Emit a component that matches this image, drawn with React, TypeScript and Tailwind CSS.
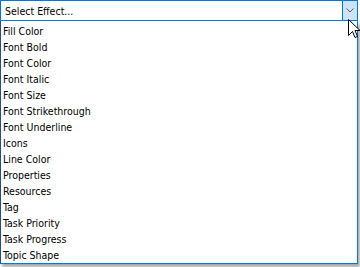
import React from "react";

const effects = [
  "Fill Color",
  "Font Bold",
  "Font Color",
  "Font Italic",
  "Font Size",
  "Font Strikethrough",
  "Font Underline",
  "Icons",
  "Line Color",
  "Properties",
  "Resources",
  "Tag",
  "Task Priority",
  "Task Progress",
  "Topic Shape",
];

export default function App() {
  return (
    <div
      className="relative w-[360px] h-[267px] bg-white text-[10.5px] text-black"
      style={{ fontFamily: '"DejaVu Sans Condensed", "Liberation Sans", sans-serif' }}
    >
      {/* combo box */}
      <div className="flex w-[358px] h-[21px] border border-[#0078d7] bg-white">
        <div className="flex-1 flex items-center pl-[4px] pt-[1px] leading-none">
          Select Effect...
        </div>
        <div className="w-[15px] flex items-center justify-center bg-[#cce4f7] border-l border-[#0078d7]">
          <svg width="8" height="5" viewBox="0 0 8 5">
            <path d="M0.5 0.5 L4 4 L7.5 0.5" fill="none" stroke="#606060" strokeWidth="1" />
          </svg>
        </div>
      </div>

      {/* list */}
      <div className="w-[358px] border border-t-0 border-[#0078d7] border-l-[#1f4e8a] bg-white pt-[2px] shadow-[2px_3px_3px_rgba(0,0,0,0.35)]">
        {effects.map((e) => (
          <div key={e} className="h-[16px] flex items-center pl-[2px] leading-none">
            {e}
          </div>
        ))}
      </div>

      {/* mouse cursor */}
      <svg
        className="absolute left-[348px] top-[19px]"
        width="13"
        height="20"
        viewBox="0 0 13 20"
      >
        <path
          d="M0.5 0.5 L0.5 16.5 L4.5 12.5 L7 18.5 L9.5 17.5 L7 11.5 L12 11.5 Z"
          fill="white"
          stroke="black"
          strokeWidth="1"
          strokeLinejoin="miter"
        />
      </svg>
    </div>
  );
}
